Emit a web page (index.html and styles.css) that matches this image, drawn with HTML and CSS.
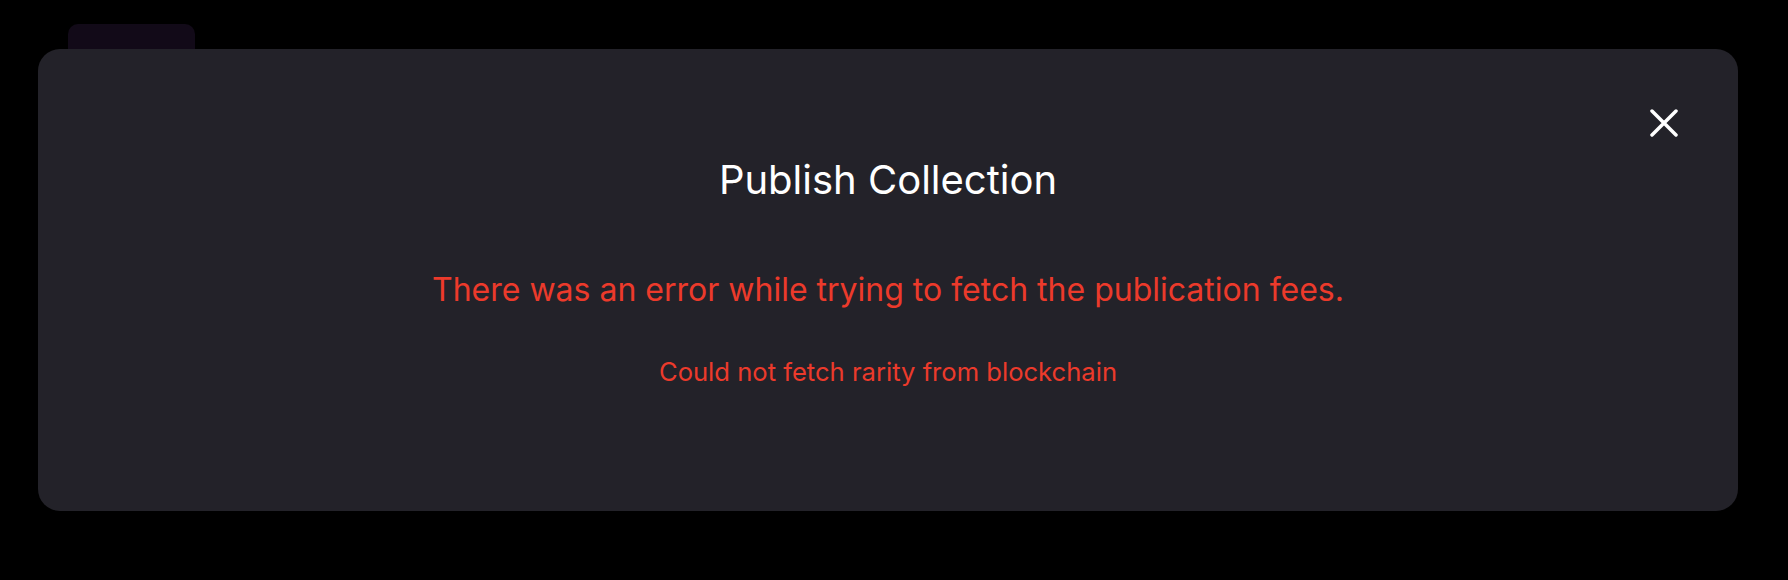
FILE: index.html
```html
<!DOCTYPE html>
<html lang="en">
<head>
    <meta charset="UTF-8">
    <meta name="viewport" content="width=device-width, initial-scale=1.0">
    <title>Publish Collection</title>
    <link rel="stylesheet" href="styles.css">
</head>
<body>
    <div class="page">
        <div class="page-btn"></div>
    </div>

    <div class="overlay">
        <div class="modal">
            <button class="close-btn" aria-label="Close">
                <svg width="28" height="28" viewBox="0 0 28 28">
                    <path d="M2 2 L26 26 M26 2 L2 26" stroke="#fff" stroke-width="3.5" stroke-linecap="round" fill="none"/>
                </svg>
            </button>

            <h2 class="modal-title">Publish Collection</h2>
            <p class="error-main">There was an error while trying to fetch the publication fees.</p>
            <p class="error-detail">Could not fetch rarity from blockchain</p>
        </div>
    </div>
</body>
</html>
```

FILE: styles.css
```css
* {
    margin: 0;
    padding: 0;
    box-sizing: border-box;
}

body {
    font-family: Inter, 'Noto Sans', sans-serif;
    background: #000;
    min-height: 100vh;
    color: white;
}

.page {
    padding: 24px 0 0 68px;
}

.page-btn {
    width: 127px;
    height: 44px;
    background: #120a18;
    border-radius: 10px;
}

.overlay {
    position: fixed;
    inset: 0;
    padding: 49px 50px 69px 38px;
}

.modal {
    position: relative;
    height: 100%;
    background: #232229;
    border-radius: 22px;
    display: flex;
    flex-direction: column;
    align-items: center;
    padding-top: 107px;
    text-align: center;
}

.close-btn {
    position: absolute;
    top: 60px;
    right: 60px;
    width: 28px;
    height: 28px;
    background: none;
    border: none;
    cursor: pointer;
    display: flex;
}

.modal-title {
    font-size: 40px;
    font-weight: 400;
    line-height: 1.2;
    color: #fff;
}

.error-main {
    margin-top: 67px;
    font-size: 32px;
    line-height: 1.2;
    color: #ec3a2b;
}

.error-detail {
    margin-top: 48px;
    font-size: 25.6px;
    line-height: 1.2;
    color: #ec3a2b;
}
```
